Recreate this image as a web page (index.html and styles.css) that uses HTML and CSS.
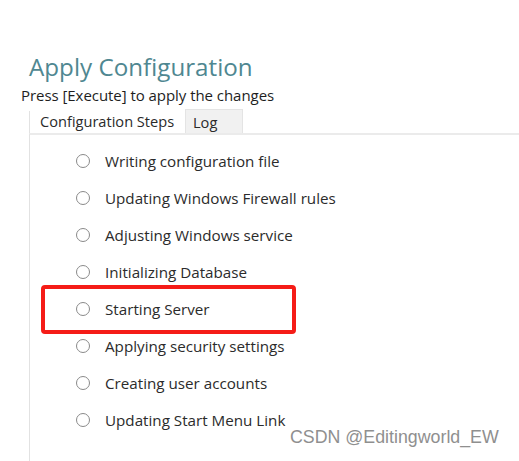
FILE: index.html
```html
<!DOCTYPE html>
<html>
<head>
<meta charset="utf-8">
<link rel="stylesheet" href="styles.css">
</head>
<body>
<div class="page">
  <h1 class="title">Apply Configuration</h1>
  <p class="subtitle">Press [Execute] to apply the changes</p>
  <div class="tabs">
    <div class="tab active">Configuration Steps</div>
    <div class="tab">Log</div>
  </div>
  <div class="panel">
    <ul class="steps">
      <li class="step"><span class="radio"></span><span>Writing configuration file</span></li>
      <li class="step"><span class="radio"></span><span>Updating Windows Firewall rules</span></li>
      <li class="step"><span class="radio"></span><span>Adjusting Windows service</span></li>
      <li class="step"><span class="radio"></span><span>Initializing Database</span></li>
      <li class="step highlight"><span class="radio"></span><span>Starting Server</span></li>
      <li class="step"><span class="radio"></span><span>Applying security settings</span></li>
      <li class="step"><span class="radio"></span><span>Creating user accounts</span></li>
      <li class="step"><span class="radio"></span><span>Updating Start Menu Link</span></li>
    </ul>
  </div>
  <div class="watermark">CSDN @Editingworld_EW</div>
</div>
</body>
</html>
```

FILE: styles.css
```css
* { box-sizing: border-box; }
html, body {
  margin: 0;
  padding: 0;
  background: #ffffff;
  overflow: hidden;
}
.page {
  position: relative;
  width: 519px;
  height: 461px;
  padding-top: 49px;
  font-family: "Open Sans", "Noto Sans", sans-serif;
  overflow: hidden;
}
.title {
  margin: 0 0 0 29px;
  font-size: 24.2px;
  font-weight: 400;
  line-height: 36px;
  color: #4f8791;
}
.subtitle {
  margin: 0 0 0 21px;
  font-size: 15px;
  line-height: 20px;
  color: #1e1e1e;
  letter-spacing: -0.05px;
}
.tabs {
  display: flex;
  align-items: flex-end;
  margin-left: 29px;
  height: 24px;
  margin-top: 4px;
}
.tab {
  font-size: 14.6px;
  line-height: 20px;
  color: #2a2a2a;
}
.tab.active {
  height: 22px;
  padding: 0 8px 0 10px;
  border-left: 1px solid #e2e2e2;
  background: #fff;
  width: 156px;
}
.tab:not(.active) {
  height: 24px;
  width: 58px;
  padding: 2px 0 0 7px;
  background: #f1f1f1;
  border: 1px solid #e4e4e4;
  border-bottom: none;
}
.panel {
  margin-left: 29px;
  border-left: 1px solid #e2e2e2;
  border-top: 2px solid #ebebeb;
  height: 400px;
}
.steps {
  list-style: none;
  margin: 0;
  padding: 7px 0 0 0;
}
.step {
  position: relative;
  display: flex;
  align-items: center;
  height: 37px;
  padding-left: 46px;
  font-size: 15.2px;
  color: #2b2b2b;
}
.radio {
  width: 14px;
  height: 14px;
  border: 1.6px solid #8a8a8a;
  border-radius: 50%;
  margin-right: 15px;
  flex: none;
}
.highlight::after {
  content: "";
  position: absolute;
  left: 11px;
  top: -5px;
  width: 247px;
  height: 41px;
  border: 4px solid #f51c17;
  border-radius: 4px;
}
.watermark {
  position: absolute;
  left: 290px;
  top: 427px;
  font-family: "Liberation Sans", Arial, sans-serif;
  font-size: 17.8px;
  color: #8f8f8f;
}
```
